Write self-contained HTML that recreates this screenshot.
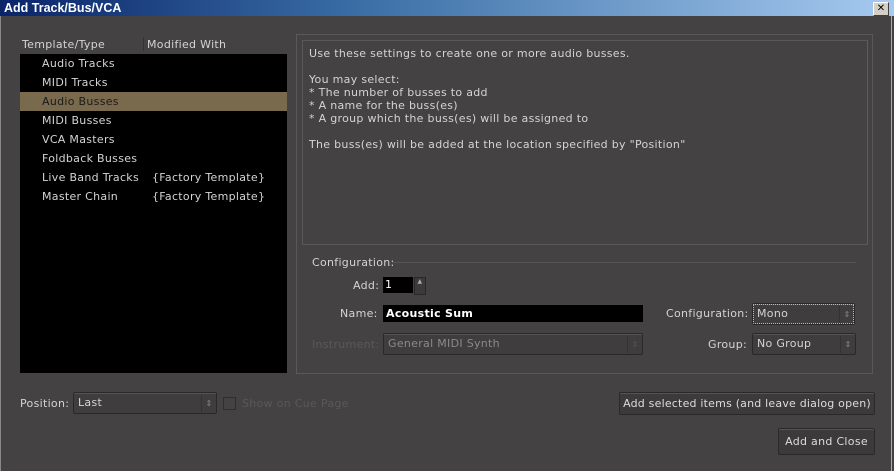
<!DOCTYPE html>
<html><head><style>
body{margin:0;width:894px;height:471px;overflow:hidden;background:#444243;font-family:"DejaVu Sans","Liberation Sans",sans-serif;font-size:11px;color:#d4d4d4;position:relative;letter-spacing:0.3px}
.a{position:absolute;white-space:nowrap}
.title{left:0;top:0;width:894px;height:16px;background:linear-gradient(90deg,#0a246a,#3a6ea5 40%,#a6caf0);color:#fff;font-weight:bold;font-family:"Liberation Sans",sans-serif;font-size:12.5px;line-height:16px;text-indent:4px;letter-spacing:0}
.close{right:5px;top:2px;width:14px;height:12px;background:#d4d0c8;border:1px solid;border-color:#fff #404040 #404040 #fff;color:#000;font-size:10px;line-height:12px;text-align:center;font-weight:bold;letter-spacing:0}
.list{left:20px;top:54px;width:267px;height:319px;background:#000}
.row{position:absolute;left:0;width:267px;height:19px;line-height:20px}
.row span{position:absolute;left:22px}
.row i{position:absolute;left:132px;font-style:normal}
.btn{background:#3c3a3b;border:1px solid #2a2929;border-radius:2px;box-shadow:inset 0 1px 0 #555;color:#ddd;text-align:center}
.combo{background:#3f3d3e;border:1px solid #2a2929;border-radius:2px;box-shadow:inset 0 1px 0 #555;line-height:20px;text-indent:4px}
.arr{position:absolute;right:0;top:2px;width:14px;height:17px;border-left:1px solid #333;color:#888;font-size:8px;text-align:center;line-height:17px;text-indent:0}
</style></head><body>
<div class="a title">Add Track/Bus/VCA</div>
<div class="a close">✕</div>
<div class="a" style="left:0;top:16px;width:1px;height:455px;background:#888"></div>
<div class="a" style="right:2px;top:16px;width:1px;height:455px;background:#aaa"></div>

<div class="a" style="left:22px;top:38px">Template/Type</div>
<div class="a" style="left:143px;top:37px;width:1px;height:14px;background:#333"></div>
<div class="a" style="left:147px;top:38px">Modified With</div>
<div class="a list">
<div class="row" style="top:0"><span>Audio Tracks</span></div>
<div class="row" style="top:19px"><span>MIDI Tracks</span></div>
<div class="row" style="top:38px;background:#7a6a4d;color:#1a1a1a"><span>Audio Busses</span></div>
<div class="row" style="top:57px"><span>MIDI Busses</span></div>
<div class="row" style="top:76px"><span>VCA Masters</span></div>
<div class="row" style="top:95px"><span>Foldback Busses</span></div>
<div class="row" style="top:114px"><span>Live Band Tracks</span><i>{Factory Template}</i></div>
<div class="row" style="top:133px"><span>Master Chain</span><i>{Factory Template}</i></div>
</div>

<div class="a" style="left:296px;top:34px;width:575px;height:338px;border:1px solid #5a5859"></div>
<div class="a" style="left:302px;top:40px;width:564px;height:203px;border:1px solid #5a5859;border-right-color:#5e5c5d"></div>
<div class="a" style="left:309px;top:47px;line-height:13px">Use these settings to create one or more audio busses.<br><br>You may select:<br>* The number of busses to add<br>* A name for the buss(es)<br>* A group which the buss(es) will be assigned to<br><br>The buss(es) will be added at the location specified by "Position"</div>

<div class="a" style="left:312px;top:256px">Configuration:</div>
<div class="a" style="left:392px;top:262px;width:464px;height:1px;background:#555"></div>
<div class="a" style="left:353px;top:279px">Add:</div>
<div class="a" style="left:383px;top:277px;width:30px;height:16px;background:#000;color:#fff;line-height:16px;text-indent:2px">1</div>
<div class="a" style="left:414px;top:277px;width:10px;height:16px;background:#3c3a3b;border:1px solid #2a2929;font-size:6px;color:#aaa;text-align:center">▲</div>
<div class="a" style="left:340px;top:307px">Name:</div>
<div class="a" style="left:383px;top:305px;width:260px;height:17px;background:#000;color:#fff;font-weight:bold;line-height:17px;text-indent:3px">Acoustic Sum</div>
<div class="a" style="left:312px;top:338px;color:#5a5859">Instrument:</div>
<div class="a combo" style="left:383px;top:333px;width:258px;height:20px;color:#8a8a8a">General MIDI Synth<div class="arr" style="color:#555">⇕</div></div>
<div class="a" style="left:666px;top:307px">Configuration:</div>
<div class="a combo" style="left:752px;top:303px;width:101px;height:20px;outline:1px dotted #bbb;outline-offset:-2px">Mono<div class="arr">⇕</div></div>
<div class="a" style="left:708px;top:338px">Group:</div>
<div class="a combo" style="left:752px;top:333px;width:102px;height:20px">No Group<div class="arr">⇕</div></div>

<div class="a" style="left:20px;top:397px">Position:</div>
<div class="a combo" style="left:73px;top:392px;width:142px;height:20px">Last<div class="arr">⇕</div></div>
<div class="a" style="left:223px;top:397px;width:11px;height:11px;border:1px solid #2f2e2e"></div>
<div class="a" style="left:242px;top:397px;color:#5a5859">Show on Cue Page</div>

<div class="a btn" style="left:619px;top:392px;width:254px;height:21px;line-height:21px;letter-spacing:0.2px">Add selected items (and leave dialog open)</div>
<div class="a btn" style="left:778px;top:428px;width:95px;height:25px;line-height:25px">Add and Close</div>
</body></html>
